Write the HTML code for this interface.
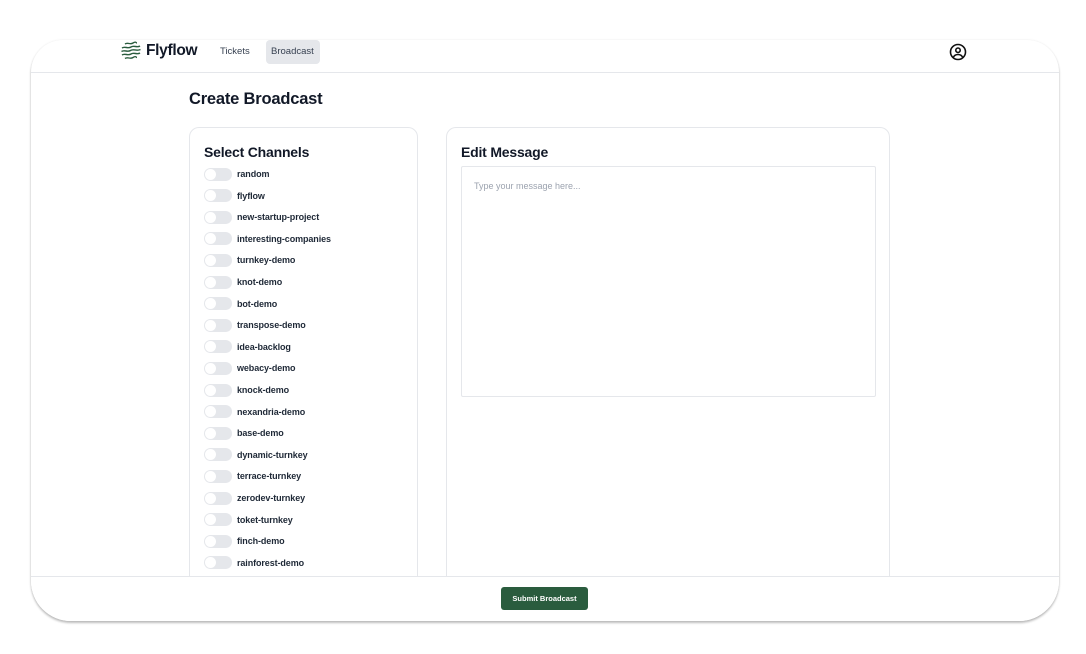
<!DOCTYPE html>
<html><head><style>
*{box-sizing:border-box;margin:0;padding:0}
body{width:1086px;height:654px;background:#fff;font-family:"Liberation Sans",Arial,sans-serif;position:relative;overflow:hidden;color:#111827}
.frame{position:absolute;left:31px;top:40px;width:1028px;height:581px;border-radius:32px 32px 40px 40px;background:#fff;box-shadow:0 2px 2px rgba(0,0,0,.25),0 0 2px rgba(0,0,0,.08);overflow:hidden}
.hdr{position:absolute;left:0;top:0;width:100%;height:33px;border-bottom:1px solid #e5e7eb}
.logo{position:absolute;left:89px;top:0px;display:flex;align-items:center;font-weight:bold;font-size:15.5px;letter-spacing:-0.3px}
.nav{position:absolute;top:6px;font-size:9.5px;color:#374151}
.bc{position:absolute;left:235px;top:0;width:54px;height:24px;background:#e5e7eb;border-radius:4px}
h1{position:absolute;left:158px;top:50px;font-size:16.5px;font-weight:bold;letter-spacing:-0.2px}
.card{position:absolute;border:1px solid #e5e7eb;border-radius:10px;background:#fff}
.card h2{position:absolute;left:14px;top:16px;font-size:14px;font-weight:bold;letter-spacing:-0.2px}
.row{position:absolute;left:14px;height:14px;display:flex;align-items:center;font-size:9px;font-weight:bold;color:#1f2937;letter-spacing:-0.1px}
.tg{width:28px;height:13px;border-radius:7px;background:#e5e7eb;margin-right:5px;position:relative}
.tg::after{content:"";position:absolute;left:1px;top:1px;width:11px;height:11px;border-radius:50%;background:#fff}
.ta{position:absolute;left:14px;top:38px;width:415px;height:231px;border:1px solid #e5e7eb;border-radius:2px;font-size:9px;color:#9ca3af;padding:14px 12px}
.ftr{position:absolute;left:0;top:536px;width:100%;height:45px;border-top:1px solid #e5e7eb;background:#fff}
.btn{position:absolute;left:470px;top:10px;width:87px;height:23px;background:#2a5c3e;border-radius:3px;color:#fff;font-size:7.5px;font-weight:bold;text-align:center;line-height:23px}
</style></head><body>
<div class="frame">
<div class="hdr">
 <div class="logo"><svg width="22" height="22" viewBox="0 0 22 22" style="margin-right:4px"><g fill="none" stroke="#2a5c3e" stroke-width="1.4"><path d="M5 4c3-2 5 1 8-1s3 0 4 0"/><path d="M2 8c3-2 6 1 9-1s6 1 9-1"/><path d="M1.5 11.5c3-2 6 1 9-1s6 1 10-1"/><path d="M2 15c3-2 6 1 9-1s6 1 9-1"/><path d="M5 18.5c3-2 5 1 8-1s3 0 4 0"/></g></svg>Flyflow</div>
 <div class="nav" style="left:189px">Tickets</div>
 <div class="bc"></div>
 <div class="nav" style="left:240px;color:#374151">Broadcast</div>
 <svg style="position:absolute;left:918px;top:3px" width="18" height="18" viewBox="0 0 18 18"><g fill="none" stroke="#111" stroke-width="1.6"><circle cx="9" cy="9" r="7.5"/><circle cx="9" cy="7.2" r="2.2"/><path d="M4.3 14.3c1-2 2.6-2.8 4.7-2.8s3.7.8 4.7 2.8"/></g></svg>
</div>
<h1>Create Broadcast</h1>
<div class="card" style="left:158px;top:87px;width:229px;height:520px"><h2>Select Channels</h2>
<div class="row" style="top:39px"><span class="tg"></span>random</div>
<div class="row" style="top:60.6px"><span class="tg"></span>flyflow</div>
<div class="row" style="top:82.2px"><span class="tg"></span>new-startup-project</div>
<div class="row" style="top:103.8px"><span class="tg"></span>interesting-companies</div>
<div class="row" style="top:125.4px"><span class="tg"></span>turnkey-demo</div>
<div class="row" style="top:147px"><span class="tg"></span>knot-demo</div>
<div class="row" style="top:168.6px"><span class="tg"></span>bot-demo</div>
<div class="row" style="top:190.2px"><span class="tg"></span>transpose-demo</div>
<div class="row" style="top:211.8px"><span class="tg"></span>idea-backlog</div>
<div class="row" style="top:233.4px"><span class="tg"></span>webacy-demo</div>
<div class="row" style="top:255px"><span class="tg"></span>knock-demo</div>
<div class="row" style="top:276.6px"><span class="tg"></span>nexandria-demo</div>
<div class="row" style="top:298.2px"><span class="tg"></span>base-demo</div>
<div class="row" style="top:319.8px"><span class="tg"></span>dynamic-turnkey</div>
<div class="row" style="top:341.4px"><span class="tg"></span>terrace-turnkey</div>
<div class="row" style="top:363px"><span class="tg"></span>zerodev-turnkey</div>
<div class="row" style="top:384.6px"><span class="tg"></span>toket-turnkey</div>
<div class="row" style="top:406.2px"><span class="tg"></span>finch-demo</div>
<div class="row" style="top:427.8px"><span class="tg"></span>rainforest-demo</div>
</div>
<div class="card" style="left:415px;top:87px;width:444px;height:520px"><h2>Edit Message</h2>
<div class="ta">Type your message here...</div></div>
<div class="ftr"><div class="btn">Submit Broadcast</div></div>
</div>
</body></html>
